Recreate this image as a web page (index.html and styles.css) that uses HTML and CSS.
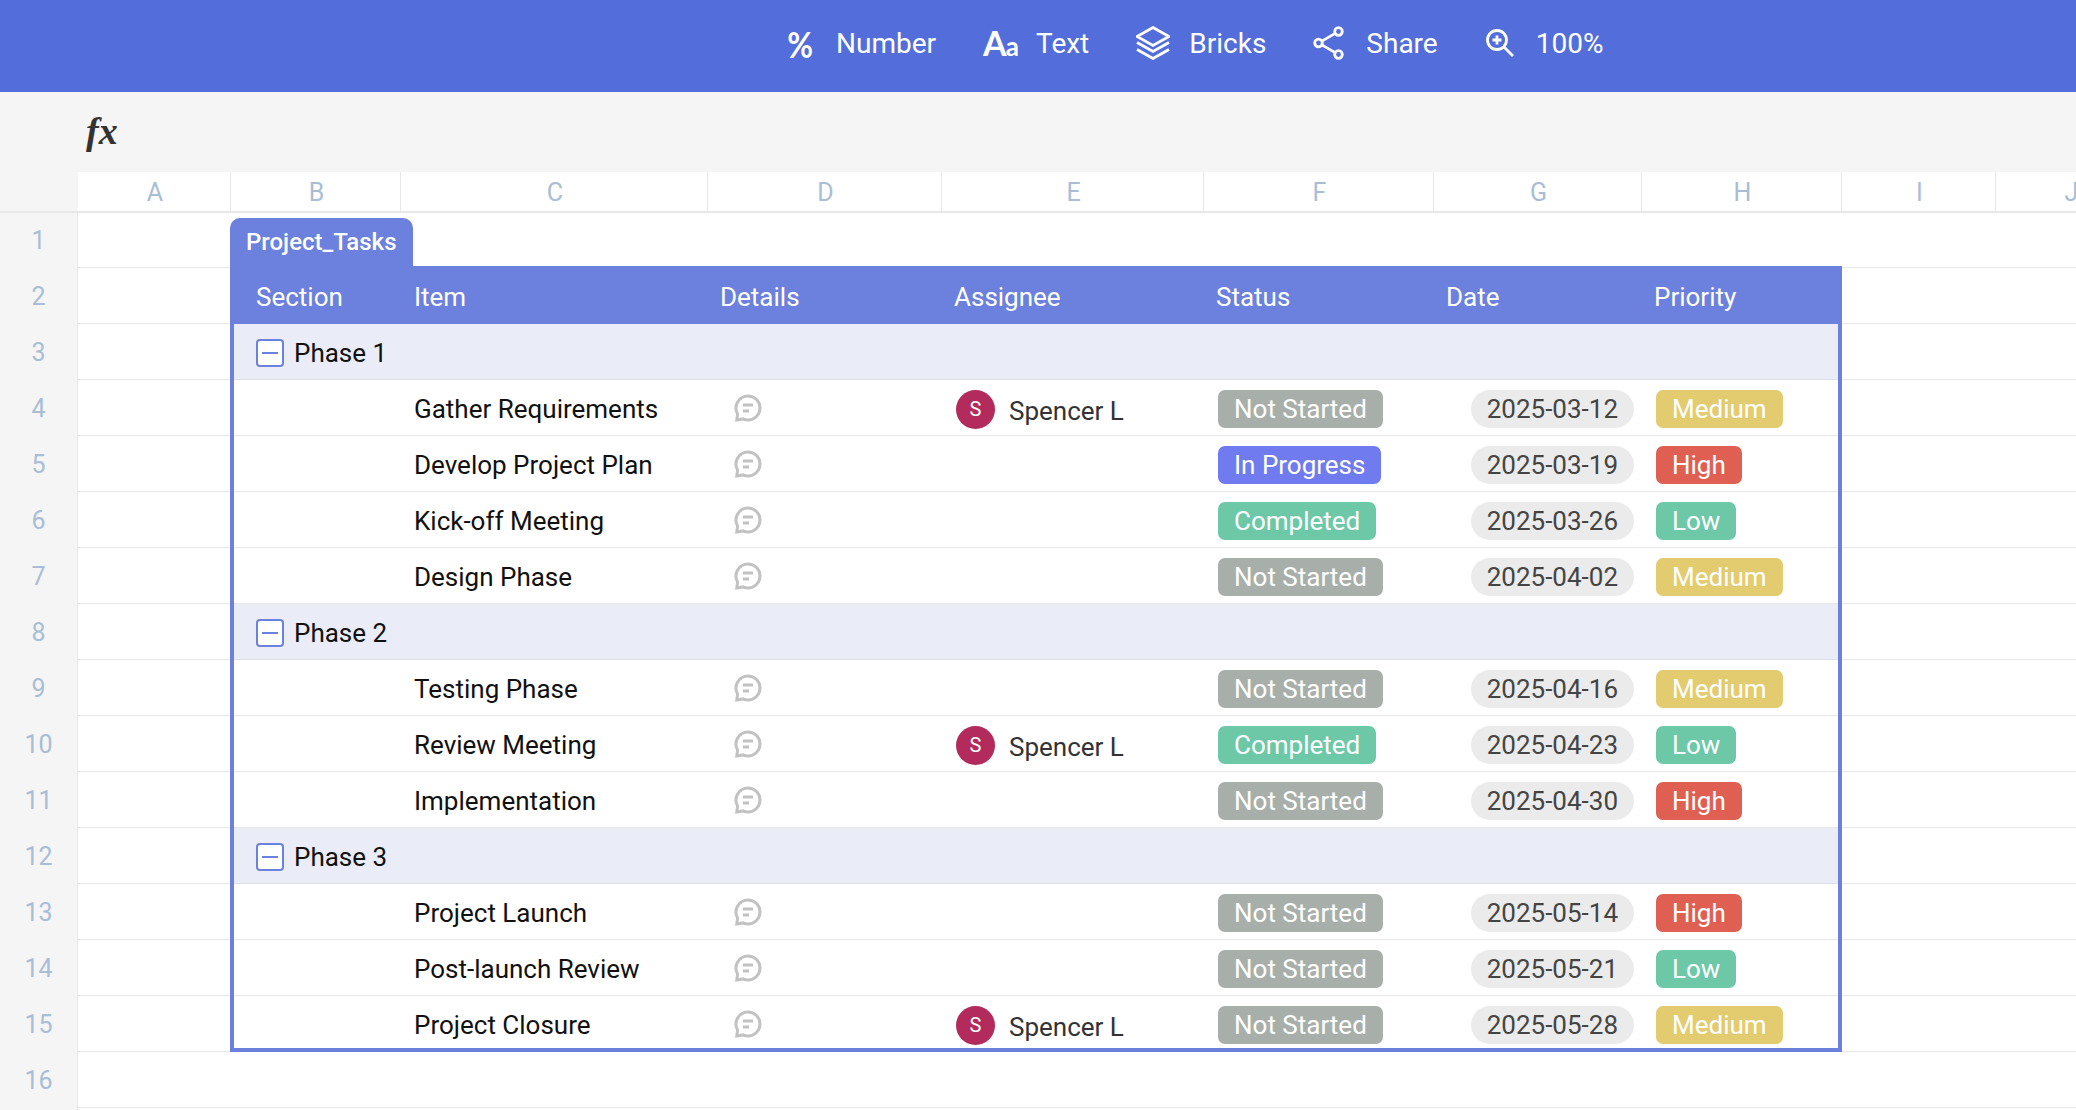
FILE: index.html
```html
<!DOCTYPE html>
<html lang="en">

<head>
    <meta charset="UTF-8">
    <title>Project_Tasks</title>
    <link rel="stylesheet" href="styles.css">
</head>

<body>
    <div class="topBar">
        <div class="tool">
            <span class="toolGlyph percent">%</span>
            <span>Number</span>
        </div>
        <div class="tool">
            <span class="toolGlyph fontGlyph">A<small>a</small></span>
            <span>Text</span>
        </div>
        <div class="tool">
            <svg class="toolIcon" width="34" height="34" viewBox="0 0 34 34">
                <path d="M17 1.5 33 10.5 17 19.5 1 10.5z" />
                <path d="M1 16.5 17 25.5 33 16.5" />
                <path d="M1 23.5 17 32.5 33 23.5" />
            </svg>
            <span class="bricksLabel">Bricks</span>
        </div>
        <div class="tool">
            <svg class="toolIcon" width="32" height="34" viewBox="0 0 32 34">
                <circle cx="25.5" cy="5.5" r="3.8" />
                <circle cx="5.5" cy="17" r="3.8" />
                <circle cx="25.5" cy="28.5" r="3.8" />
                <path d="M22.2 7.4 8.8 15.1M8.8 18.9l13.4 7.7" />
            </svg>
            <span>Share</span>
        </div>
        <div class="tool">
            <svg class="toolIcon" width="30" height="30" viewBox="0 0 30 30">
                <circle cx="12" cy="12" r="9.5" />
                <path d="M19 19 28 28M7.5 12h9M12 7.5v9" />
            </svg>
            <span>100%</span>
        </div>
    </div>

    <div class="formulaBar"><span class="fx">fx</span></div>

    <div class="sheet">
        <div class="colHead">
            <div class="corner"></div>
            <div class="col colA">A</div>
            <div class="col colB">B</div>
            <div class="col colC">C</div>
            <div class="col colD">D</div>
            <div class="col colE">E</div>
            <div class="col colF">F</div>
            <div class="col colG">G</div>
            <div class="col colH">H</div>
            <div class="col colI">I</div>
            <div class="col colJ">J</div>
        </div>

        <div class="gridRow"><span>1</span></div>
        <div class="gridRow"><span>2</span></div>
        <div class="gridRow"><span>3</span></div>
        <div class="gridRow"><span>4</span></div>
        <div class="gridRow"><span>5</span></div>
        <div class="gridRow"><span>6</span></div>
        <div class="gridRow"><span>7</span></div>
        <div class="gridRow"><span>8</span></div>
        <div class="gridRow"><span>9</span></div>
        <div class="gridRow"><span>10</span></div>
        <div class="gridRow"><span>11</span></div>
        <div class="gridRow"><span>12</span></div>
        <div class="gridRow"><span>13</span></div>
        <div class="gridRow"><span>14</span></div>
        <div class="gridRow"><span>15</span></div>
        <div class="gridRow"><span>16</span></div>
        <div class="gridRow"><span></span></div>

        <!-- the table floats over the sheet cells -->
        <div class="tableBlock">
            <div class="tableTab">Project_Tasks</div>
            <div class="table">
                <div class="tRow tHead">
                    <div class="cellSection">Section</div>
                    <div class="cell item">Item</div>
                    <div class="cell">Details</div>
                    <div class="cell">Assignee</div>
                    <div class="cell">Status</div>
                    <div class="cell">Date</div>
                    <div class="cell">Priority</div>
                </div>

                <div class="tRow groupRow">
                    <div class="toggle"></div>
                    <div class="groupName">Phase 1</div>
                </div>
                <div class="tRow">
                    <div></div>
                    <div class="cell item">Gather Requirements</div>
                    <div class="cell"><svg class="note" width="28" height="28" viewBox="0 0 28 28"><path d="M14 2a12 12 0 0 1 0 24 12 12 0 0 1-5-1.1L2.8 26l.8-6A12 12 0 0 1 14 2z" /><path d="M9 11h10M9 17h6" /></svg></div>
                    <div class="cell person"><span class="avatar">S</span><span class="personName">Spencer L</span></div>
                    <div class="cell"><span class="pill grey">Not Started</span></div>
                    <div class="cell dateCell"><span class="pill date">2025-03-12</span></div>
                    <div class="cell"><span class="pill yellow">Medium</span></div>
                </div>
                <div class="tRow">
                    <div></div>
                    <div class="cell item">Develop Project Plan</div>
                    <div class="cell"><svg class="note" width="28" height="28" viewBox="0 0 28 28"><path d="M14 2a12 12 0 0 1 0 24 12 12 0 0 1-5-1.1L2.8 26l.8-6A12 12 0 0 1 14 2z" /><path d="M9 11h10M9 17h6" /></svg></div>
                    <div class="cell"></div>
                    <div class="cell"><span class="pill blue">In Progress</span></div>
                    <div class="cell dateCell"><span class="pill date">2025-03-19</span></div>
                    <div class="cell"><span class="pill red">High</span></div>
                </div>
                <div class="tRow">
                    <div></div>
                    <div class="cell item">Kick-off Meeting</div>
                    <div class="cell"><svg class="note" width="28" height="28" viewBox="0 0 28 28"><path d="M14 2a12 12 0 0 1 0 24 12 12 0 0 1-5-1.1L2.8 26l.8-6A12 12 0 0 1 14 2z" /><path d="M9 11h10M9 17h6" /></svg></div>
                    <div class="cell"></div>
                    <div class="cell"><span class="pill green">Completed</span></div>
                    <div class="cell dateCell"><span class="pill date">2025-03-26</span></div>
                    <div class="cell"><span class="pill green">Low</span></div>
                </div>
                <div class="tRow">
                    <div></div>
                    <div class="cell item">Design Phase</div>
                    <div class="cell"><svg class="note" width="28" height="28" viewBox="0 0 28 28"><path d="M14 2a12 12 0 0 1 0 24 12 12 0 0 1-5-1.1L2.8 26l.8-6A12 12 0 0 1 14 2z" /><path d="M9 11h10M9 17h6" /></svg></div>
                    <div class="cell"></div>
                    <div class="cell"><span class="pill grey">Not Started</span></div>
                    <div class="cell dateCell"><span class="pill date">2025-04-02</span></div>
                    <div class="cell"><span class="pill yellow">Medium</span></div>
                </div>

                <div class="tRow groupRow">
                    <div class="toggle"></div>
                    <div class="groupName">Phase 2</div>
                </div>
                <div class="tRow">
                    <div></div>
                    <div class="cell item">Testing Phase</div>
                    <div class="cell"><svg class="note" width="28" height="28" viewBox="0 0 28 28"><path d="M14 2a12 12 0 0 1 0 24 12 12 0 0 1-5-1.1L2.8 26l.8-6A12 12 0 0 1 14 2z" /><path d="M9 11h10M9 17h6" /></svg></div>
                    <div class="cell"></div>
                    <div class="cell"><span class="pill grey">Not Started</span></div>
                    <div class="cell dateCell"><span class="pill date">2025-04-16</span></div>
                    <div class="cell"><span class="pill yellow">Medium</span></div>
                </div>
                <div class="tRow">
                    <div></div>
                    <div class="cell item">Review Meeting</div>
                    <div class="cell"><svg class="note" width="28" height="28" viewBox="0 0 28 28"><path d="M14 2a12 12 0 0 1 0 24 12 12 0 0 1-5-1.1L2.8 26l.8-6A12 12 0 0 1 14 2z" /><path d="M9 11h10M9 17h6" /></svg></div>
                    <div class="cell person"><span class="avatar">S</span><span class="personName">Spencer L</span></div>
                    <div class="cell"><span class="pill green">Completed</span></div>
                    <div class="cell dateCell"><span class="pill date">2025-04-23</span></div>
                    <div class="cell"><span class="pill green">Low</span></div>
                </div>
                <div class="tRow">
                    <div></div>
                    <div class="cell item">Implementation</div>
                    <div class="cell"><svg class="note" width="28" height="28" viewBox="0 0 28 28"><path d="M14 2a12 12 0 0 1 0 24 12 12 0 0 1-5-1.1L2.8 26l.8-6A12 12 0 0 1 14 2z" /><path d="M9 11h10M9 17h6" /></svg></div>
                    <div class="cell"></div>
                    <div class="cell"><span class="pill grey">Not Started</span></div>
                    <div class="cell dateCell"><span class="pill date">2025-04-30</span></div>
                    <div class="cell"><span class="pill red">High</span></div>
                </div>

                <div class="tRow groupRow">
                    <div class="toggle"></div>
                    <div class="groupName">Phase 3</div>
                </div>
                <div class="tRow">
                    <div></div>
                    <div class="cell item">Project Launch</div>
                    <div class="cell"><svg class="note" width="28" height="28" viewBox="0 0 28 28"><path d="M14 2a12 12 0 0 1 0 24 12 12 0 0 1-5-1.1L2.8 26l.8-6A12 12 0 0 1 14 2z" /><path d="M9 11h10M9 17h6" /></svg></div>
                    <div class="cell"></div>
                    <div class="cell"><span class="pill grey">Not Started</span></div>
                    <div class="cell dateCell"><span class="pill date">2025-05-14</span></div>
                    <div class="cell"><span class="pill red">High</span></div>
                </div>
                <div class="tRow">
                    <div></div>
                    <div class="cell item">Post-launch Review</div>
                    <div class="cell"><svg class="note" width="28" height="28" viewBox="0 0 28 28"><path d="M14 2a12 12 0 0 1 0 24 12 12 0 0 1-5-1.1L2.8 26l.8-6A12 12 0 0 1 14 2z" /><path d="M9 11h10M9 17h6" /></svg></div>
                    <div class="cell"></div>
                    <div class="cell"><span class="pill grey">Not Started</span></div>
                    <div class="cell dateCell"><span class="pill date">2025-05-21</span></div>
                    <div class="cell"><span class="pill green">Low</span></div>
                </div>
                <div class="tRow lastRow">
                    <div></div>
                    <div class="cell item">Project Closure</div>
                    <div class="cell"><svg class="note" width="28" height="28" viewBox="0 0 28 28"><path d="M14 2a12 12 0 0 1 0 24 12 12 0 0 1-5-1.1L2.8 26l.8-6A12 12 0 0 1 14 2z" /><path d="M9 11h10M9 17h6" /></svg></div>
                    <div class="cell person"><span class="avatar">S</span><span class="personName">Spencer L</span></div>
                    <div class="cell"><span class="pill grey">Not Started</span></div>
                    <div class="cell dateCell"><span class="pill date">2025-05-28</span></div>
                    <div class="cell"><span class="pill yellow">Medium</span></div>
                </div>
            </div>
        </div>
    </div>
</body>

</html>
```

FILE: styles.css
```css
* {
    padding: 0;
    margin: 0;
    box-sizing: border-box;
}

html,
body {
    height: 100%;
    overflow: hidden;
}

body {
    font-family: Roboto, "Liberation Sans", sans-serif;
    font-size: 26px;
    color: #111;
    background: #f5f5f5;
}

/* top toolbar */
.topBar {
    display: flex;
    align-items: center;
    gap: 47px;
    height: 92px;
    padding-left: 785px;
    padding-bottom: 6px;
    background: #536ddb;
    color: #fff;
    font-size: 28px;
}

.tool {
    display: flex;
    align-items: center;
    gap: 21px;
}

.toolIcon {
    fill: none;
    stroke: #fff;
    stroke-width: 2.8;
}

.toolGlyph {
    font-family: Lato, Roboto, sans-serif;
    font-weight: 700;
    line-height: 1;
}

.percent {
    width: 30px;
    font-size: 37px;
    transform: scaleX(.85);
}

.fontGlyph {
    width: 32px;
    font-size: 34px;
    letter-spacing: -1px;
    white-space: nowrap;
}

.fontGlyph small {
    font-size: 26px;
}

.bricksLabel {
    margin-left: -2px;
}

.formulaBar {
    display: flex;
    align-items: center;
    height: 80px;
    padding-left: 86px;
    padding-bottom: 2px;
}

.fx {
    font-family: "Liberation Serif", serif;
    font-style: italic;
    font-weight: 700;
    font-size: 38px;
    color: #333;
}

/* sheet grid */
.sheet {
    position: relative;
}

.colHead {
    display: flex;
    height: 41px;
    overflow: hidden;
    border-bottom: 2px solid #e8e8e8;
    color: #a9bdd6;
}

.corner {
    flex: none;
    width: 78px;
    background: #f5f5f5;
}

.col {
    flex: none;
    padding-left: 2px;
    text-align: center;
    line-height: 42px;
    font-size: 25px;
    background: #fff;
    border-right: 1px solid #e8e8e8;
}

.colA { width: 153px; }
.colB { width: 170px; }
.colC { width: 307px; }
.colD { width: 234px; }
.colE { width: 262px; }
.colF { width: 230px; }
.colG { width: 208px; }
.colH { width: 200px; }
.colI { width: 154px; }
.colJ { width: 150px; }

.gridRow {
    display: flex;
    height: 56px;
    padding-left: 78px;
    background: #fff;
    border-bottom: 1px solid #e8e8e8;
    position: relative;
}

.colHead + .gridRow {
    height: 55px;
}

.gridRow span {
    position: absolute;
    left: 0;
    top: 0;
    bottom: -1px;
    width: 78px;
    display: flex;
    align-items: center;
    justify-content: center;
    background: #f5f5f5;
    border-right: 1px solid #e8e8e8;
    color: #a9bdd6;
    font-size: 25px;
}

/* table on top of the sheet */
.tableBlock {
    position: absolute;
    left: 230px;
    top: 46px;
    width: 1612px;
}

.tableTab {
    width: 183px;
    height: 48px;
    padding: 3px 0 0 16px;
    line-height: 42px;
    background: #6c80de;
    color: #fff;
    font-size: 24px;
    font-weight: 500;
    border-radius: 10px 10px 0 0;
}

.table {
    border: 4px solid #6c80de;
    border-top: 0;
    background: #fff;
}

.tRow {
    display: grid;
    grid-template-columns: 167px 307px 234px 262px 230px 208px 196px;
    align-items: center;
    height: 56px;
    padding-top: 3px;
    border-bottom: 1px solid #e8e8e8;
}

.cell {
    padding-left: 14px;
}

.tHead {
    height: 58px;
    padding-top: 4px;
    background: #6c80de;
    color: #fff;
    border-bottom: 0;
}

.tHead .cell {
    padding-left: 12px;
}

.cellSection {
    padding-left: 22px;
}

.tRow .item {
    padding-left: 13px;
}

.groupRow {
    display: flex;
    background: #eaedf8;
    border-bottom-color: #dce0ea;
}

.toggle {
    position: relative;
    width: 28px;
    height: 28px;
    margin-left: 22px;
    margin-right: 10px;
    background: #fff;
    border: 2px solid #6c80de;
    border-radius: 4px;
}

.toggle::after {
    content: "";
    position: absolute;
    left: 4px;
    right: 4px;
    top: 11px;
    height: 2px;
    background: #6c80de;
}

.lastRow {
    height: 52px;
    padding-top: 6px;
    border-bottom: 0;
}

.note {
    display: block;
    margin-top: -2px;
    margin-left: 12px;
    fill: none;
    stroke: #c2c2c2;
    stroke-width: 3;
}

.person {
    display: flex;
    align-items: center;
    color: #333;
}

.avatar {
    flex: none;
    width: 39px;
    height: 39px;
    margin-right: 14px;
    line-height: 39px;
    text-align: center;
    border-radius: 50%;
    background: #b32b5c;
    color: #fff;
    font-size: 20px;
}

.personName {
    padding-top: 3px;
}

.pill {
    display: inline-block;
    vertical-align: top;
    height: 38px;
    padding: 0 16px;
    line-height: 39px;
    border-radius: 7px;
    color: #fff;
}

.grey { background: #a8afab; }
.blue { background: #6f7bee; }
.green { background: #6dc8a8; }
.yellow { background: #e3cb70; }
.red { background: #e05f53; }

.dateCell {
    padding-right: 8px;
    text-align: right;
}

.date {
    border-radius: 19px;
    background: #ebebeb;
    color: #444;
}
```
